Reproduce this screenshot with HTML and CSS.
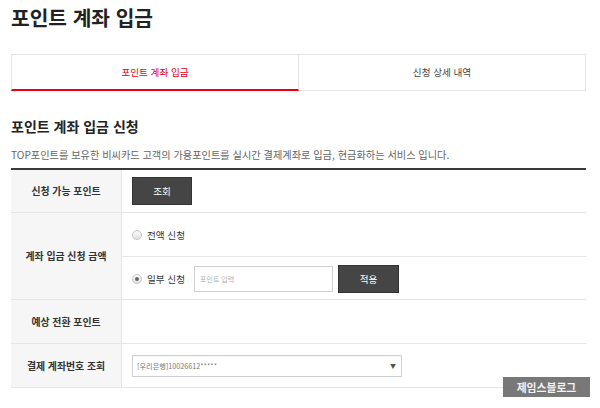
FILE: index.html
```html
<!DOCTYPE html>
<html lang="ko">
<head>
  <meta charset="UTF-8">
  <meta name="viewport" content="width=device-width, initial-scale=1">
  <title>포인트 계좌 입금</title>
  <link rel="stylesheet" href="styles.css">
</head>
<body>

<div class="wrap">
  <h1>포인트 계좌 입금</h1>

  <div class="tabs">
    <a class="tab active" href="#">포인트 계좌 입금</a>
    <a class="tab" href="#">신청 상세 내역</a>
  </div>

  <h2>포인트 계좌 입금 신청</h2>
  <p class="desc">TOP포인트를 보유한 비씨카드 고객의 가용포인트를 실시간 결제계좌로 입금, 현금화하는 서비스 입니다.</p>

  <div class="form-table">
    <div class="row row-a">
      <div class="th">신청 가능 포인트</div>
      <div class="td"><button class="btn" type="button">조회</button></div>
    </div>

    <div class="row">
      <div class="th">계좌 입금 신청 금액</div>
      <div class="td td-split">
        <div class="sub sub-top">
          <label class="radio"><span class="dot"></span>전액 신청</label>
        </div>
        <div class="sub sub-bottom">
          <label class="radio"><span class="dot checked"></span>일부 신청</label>
          <input class="point-input" type="text" placeholder="포인트 입력">
          <button class="btn btn-apply" type="button">적용</button>
        </div>
      </div>
    </div>

    <div class="row row-b">
      <div class="th">예상 전환 포인트</div>
      <div class="td"></div>
    </div>

    <div class="row row-b">
      <div class="th">결제 계좌번호 조회</div>
      <div class="td">
        <div class="select">
          <span>[우리은행]10026612*****</span>
          <span class="arrow">▼</span>
        </div>
      </div>
    </div>
  </div>
</div>

<div class="watermark">제임스블로그</div>

</body>
</html>
```

FILE: styles.css
```css
body {
  margin: 0;
  padding: 0;
  background-color: #ffffff;
  font-family: "Noto Sans CJK KR", "Noto Sans", sans-serif;
  color: #333;
}

.wrap {
  width: 575px;
  padding-left: 11px;
}

h1 {
  margin: 0;
  padding-top: 7px;
  font-size: 20.3px;
  line-height: 20px;
  font-weight: 700;
  color: #222;
}

.tabs {
  display: flex;
  margin-top: 27px;
}

.tab {
  flex: 1;
  height: 37px;
  box-sizing: border-box;
  border: 1px solid #e4e4e4;
  text-align: center;
  line-height: 34px;
  font-size: 9.6px;
  color: #444;
  text-decoration: none;
}

.tab + .tab {
  border-left: none;
}

.tab.active {
  color: #e60012;
  border-bottom: 2px solid #e60012;
}

h2 {
  margin: 28px 0 0;
  font-size: 14px;
  line-height: 14px;
  font-weight: 700;
  color: #222;
}

.desc {
  margin: 17px 0 0;
  font-size: 10.2px;
  line-height: 10px;
  color: #666;
}

.form-table {
  margin-top: 8px;
  border-top: 2px solid #3a3a3a;
}

.row {
  display: grid;
  grid-template-columns: 111px 1fr;
  border-bottom: 1px solid #e6e6e6;
}

.th {
  background-color: #f6f6f6;
  border-right: 1px solid #e6e6e6;
  display: flex;
  justify-content: center;
  align-items: center;
  font-size: 9.9px;
  font-weight: 700;
  color: #333;
}

.td {
  display: flex;
  align-items: center;
  padding-left: 10px;
}

.row-a .td {
  height: 42px;
}

.row-b .td {
  height: 43px;
}

.td-split {
  flex-direction: column;
  align-items: stretch;
  padding-left: 0;
}

.sub {
  display: flex;
  align-items: center;
  padding-left: 10px;
}

.sub-top {
  height: 43px;
  border-bottom: 1px solid #e6e6e6;
}

.sub-bottom {
  height: 42px;
  padding-top: 2px;
  box-sizing: border-box;
}

.btn {
  width: 60px;
  height: 28px;
  background-color: #454545;
  border: 1px solid #333;
  color: #fff;
  font-family: inherit;
  font-size: 9.6px;
  padding: 0;
  cursor: pointer;
}

.btn-apply {
  width: 61px;
  margin-left: 5px;
}

.radio {
  display: flex;
  align-items: center;
  font-size: 9.6px;
  color: #333;
}

.dot {
  width: 8px;
  height: 8px;
  border: 1px solid #c4c4c4;
  border-radius: 50%;
  background: linear-gradient(#fafafa, #e2e2e2);
  margin-right: 5px;
  position: relative;
}

.dot.checked::after {
  content: "";
  position: absolute;
  left: 2px;
  top: 2px;
  width: 4px;
  height: 4px;
  border-radius: 50%;
  background-color: #666;
}

.point-input {
  width: 139px;
  height: 26px;
  box-sizing: border-box;
  margin-left: 9px;
  border: 1px solid #cfcfcf;
  padding: 0 5px;
  font-family: inherit;
  font-size: 7px;
  color: #333;
  outline: none;
}

.point-input::placeholder {
  color: #b0b0b0;
}

.select {
  width: 270px;
  height: 22px;
  box-sizing: border-box;
  border: 1px solid #cfcfcf;
  display: flex;
  align-items: center;
  justify-content: space-between;
  padding: 0 5px 0 4px;
  font-size: 7.2px;
  color: #777;
  box-shadow: inset 0 1px 1px rgba(0, 0, 0, 0.04);
}

.arrow {
  font-size: 6px;
  color: #555;
}

.watermark {
  position: absolute;
  left: 503px;
  top: 377px;
  width: 87px;
  height: 20px;
  background-color: rgba(105, 105, 105, 0.9);
  color: #f2f2f2;
  font-size: 10.8px;
  font-weight: 700;
  line-height: 20px;
  text-align: center;
}
```
